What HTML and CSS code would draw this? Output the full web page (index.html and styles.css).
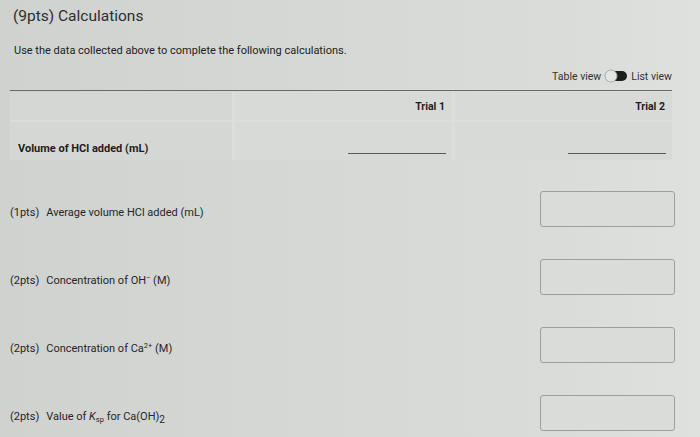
FILE: index.html
```html
<!DOCTYPE html>
<html lang="en">
<head>
<meta charset="utf-8">
<title>Calculations</title>
<link rel="stylesheet" href="styles.css">
</head>
<body>
<div class="page">
  <h1 class="title">(9pts) Calculations</h1>
  <p class="intro">Use the data collected above to complete the following calculations.</p>
  <div class="toggle-row">
    <span class="tv">Table view</span>
    <svg class="switch" width="24" height="14" viewBox="0 0 24 14">
      <rect x="7" y="2" width="16" height="10" rx="5" fill="#1e1e1e"/>
      <circle cx="7" cy="7" r="6" fill="#e4e6e4" stroke="#a9aca9" stroke-width="1"/>
    </svg>
    <span class="lv">List view</span>
  </div>
  <div class="rule"></div>
  <div class="table">
    <div class="cell head"></div>
    <div class="cell head">Trial 1</div>
    <div class="cell head">Trial 2</div>
    <div class="cell data label">Volume of HCl added (mL)</div>
    <div class="cell data"><span class="blank"></span></div>
    <div class="cell data"><span class="blank"></span></div>
  </div>
  <div class="questions">
    <div class="q">
      <div class="qlabel"><span class="pts">(1pts)</span>Average volume HCl added (mL)</div>
      <div class="box"></div>
    </div>
    <div class="q">
      <div class="qlabel"><span class="pts">(2pts)</span>Concentration of OH<sup>−</sup> (M)</div>
      <div class="box"></div>
    </div>
    <div class="q">
      <div class="qlabel"><span class="pts">(2pts)</span>Concentration of Ca<sup>2+</sup> (M)</div>
      <div class="box"></div>
    </div>
    <div class="q">
      <div class="qlabel"><span class="pts">(2pts)</span>Value of <i>K</i><sub>sp</sub> for Ca(OH)<sub class="n">2</sub></div>
      <div class="box"></div>
    </div>
  </div>
</div>
</body>
</html>
```

FILE: styles.css
```css
html, body {
  margin: 0;
  padding: 0;
}
body {
  width: 700px;
  height: 437px;
  overflow: hidden;
  background: linear-gradient(90deg, #cfd2cf 0%, #d5d8d5 45%, #d9dcd9 80%, #dfe1df 100%);
  font-family: Roboto, "Liberation Sans", Arial, sans-serif;
  color: #262626;
}
.page {
  width: 662px;
  padding: 0 0 0 10px;
}
.title {
  margin: 0;
  padding-top: 6px;
  font-size: 15.5px;
  font-weight: 400;
  line-height: 20px;
  color: #2e2e2e;
  padding-left: 3px;
}
.intro {
  margin: 0;
  padding-top: 18px;
  padding-left: 4px;
  font-size: 11px;
  line-height: 14px;
  color: #222;
}
.toggle-row {
  display: flex;
  justify-content: flex-end;
  align-items: center;
  gap: 3px;
  margin-top: 11px;
  height: 14px;
  font-size: 10.5px;
  color: #333;
}
.switch {
  display: block;
}
.rule {
  margin-top: 7px;
  height: 1px;
  background: #6a6c6a;
}
.table {
  display: grid;
  grid-template-columns: 222px 217px 217px;
  grid-template-rows: 28px 38px;
  gap: 2px 3px;
  background: #dcdedc;
  margin-top: 1px;
  width: 662px;
}
.cell {
  background: #d4d7d4;
}
.cell:nth-child(3n+2), .cell:nth-child(3n) {
  background: #d7dad7;
}
.head {
  display: flex;
  justify-content: flex-end;
  align-items: center;
  padding-right: 7px;
  font-size: 10.5px;
  font-weight: 700;
  color: #1e1e1e;
}
.data {
  display: flex;
  justify-content: flex-end;
  align-items: flex-end;
  padding: 0 6px 6px 0;
}
.data.label {
  justify-content: flex-start;
  padding: 0 0 5px 8px;
  font-size: 11px;
  font-weight: 700;
  color: #1e1e1e;
}
.blank {
  display: block;
  width: 98px;
  height: 1px;
  background: #5a5c5a;
}
.questions {
  display: flex;
  flex-direction: column;
  gap: 32px;
  margin-top: 31px;
}
.q {
  display: grid;
  grid-template-columns: 1fr 135px;
  align-items: center;
  height: 36px;
  margin-right: -3px;
}
.qlabel {
  font-size: 11px;
  color: #262626;
  padding-top: 6px;
}
.pts {
  margin-right: 7px;
}
sup {
  font-size: 7.5px;
  vertical-align: 4px;
  line-height: 0;
}
sub {
  font-size: 7.5px;
  vertical-align: -2px;
  line-height: 0;
}
sub.n {
  font-size: 10px;
  vertical-align: -3px;
}
.box {
  height: 36px;
  border: 1px solid #9c9f9c;
  border-radius: 3px;
  background: #d9dcd9;
  box-sizing: border-box;
}
```
